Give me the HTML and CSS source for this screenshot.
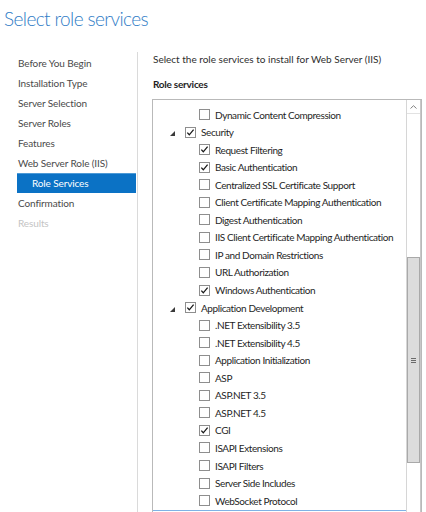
FILE: index.html
```html
<!DOCTYPE html>
<html>
<head>
<meta charset="utf-8">
<link rel="stylesheet" href="styles.css">
</head>
<body>
<div class="page">
  <h1 class="title">Select role services</h1>
  <div class="main">
    <nav class="nav">
      <div class="nav-item">Before You Begin</div>
      <div class="nav-item">Installation Type</div>
      <div class="nav-item">Server Selection</div>
      <div class="nav-item">Server Roles</div>
      <div class="nav-item">Features</div>
      <div class="nav-item">Web Server Role (IIS)</div>
      <div class="nav-item active">Role Services</div>
      <div class="nav-item">Confirmation</div>
      <div class="nav-item disabled">Results</div>
    </nav>
    <section class="content">
      <p class="intro">Select the role services to install for Web Server (IIS)</p>
      <h2 class="label">Role services</h2>
      <div class="listbox">
        <div class="tree">
          <div class="row lvl2"><span class="cb"></span><span class="txt">Dynamic Content Compression</span></div>
          <div class="row lvl1"><svg class="exp" viewBox="0 0 6 6"><polygon points="6,0 6,6 0,6"/></svg><span class="cb on"><svg viewBox="0 0 11 11"><path d="M2.3 5.6 L4.3 7.8 L8.6 2.6"/></svg></span><span class="txt">Security</span></div>
          <div class="row lvl2"><span class="cb on"><svg viewBox="0 0 11 11"><path d="M2.3 5.6 L4.3 7.8 L8.6 2.6"/></svg></span><span class="txt">Request Filtering</span></div>
          <div class="row lvl2"><span class="cb on"><svg viewBox="0 0 11 11"><path d="M2.3 5.6 L4.3 7.8 L8.6 2.6"/></svg></span><span class="txt">Basic Authentication</span></div>
          <div class="row lvl2"><span class="cb"></span><span class="txt">Centralized SSL Certificate Support</span></div>
          <div class="row lvl2"><span class="cb"></span><span class="txt">Client Certificate Mapping Authentication</span></div>
          <div class="row lvl2"><span class="cb"></span><span class="txt">Digest Authentication</span></div>
          <div class="row lvl2"><span class="cb"></span><span class="txt">IIS Client Certificate Mapping Authentication</span></div>
          <div class="row lvl2"><span class="cb"></span><span class="txt">IP and Domain Restrictions</span></div>
          <div class="row lvl2"><span class="cb"></span><span class="txt">URL Authorization</span></div>
          <div class="row lvl2"><span class="cb on"><svg viewBox="0 0 11 11"><path d="M2.3 5.6 L4.3 7.8 L8.6 2.6"/></svg></span><span class="txt">Windows Authentication</span></div>
          <div class="row lvl1"><svg class="exp" viewBox="0 0 6 6"><polygon points="6,0 6,6 0,6"/></svg><span class="cb on"><svg viewBox="0 0 11 11"><path d="M2.3 5.6 L4.3 7.8 L8.6 2.6"/></svg></span><span class="txt">Application Development</span></div>
          <div class="row lvl2"><span class="cb"></span><span class="txt">.NET Extensibility 3.5</span></div>
          <div class="row lvl2"><span class="cb"></span><span class="txt">.NET Extensibility 4.5</span></div>
          <div class="row lvl2"><span class="cb"></span><span class="txt">Application Initialization</span></div>
          <div class="row lvl2"><span class="cb"></span><span class="txt">ASP</span></div>
          <div class="row lvl2"><span class="cb"></span><span class="txt">ASP.NET 3.5</span></div>
          <div class="row lvl2"><span class="cb"></span><span class="txt">ASP.NET 4.5</span></div>
          <div class="row lvl2"><span class="cb on"><svg viewBox="0 0 11 11"><path d="M2.3 5.6 L4.3 7.8 L8.6 2.6"/></svg></span><span class="txt">CGI</span></div>
          <div class="row lvl2"><span class="cb"></span><span class="txt">ISAPI Extensions</span></div>
          <div class="row lvl2"><span class="cb"></span><span class="txt">ISAPI Filters</span></div>
          <div class="row lvl2"><span class="cb"></span><span class="txt">Server Side Includes</span></div>
          <div class="row lvl2"><span class="cb"></span><span class="txt">WebSocket Protocol</span></div>
          <div class="row lvl1 focus"></div>
        </div>
        <div class="scrollbar">
          <div class="sb-up"><svg viewBox="0 0 7 4"><path d="M0.5 3.5 L3.5 0.7 L6.5 3.5"/></svg></div>
          <div class="sb-track">
            <div class="sb-thumb"><svg viewBox="0 0 5 5"><path d="M0 0.5 H5 M0 2.5 H5 M0 4.5 H5"/></svg></div>
          </div>
        </div>
      </div>
    </section>
  </div>
</div>
</body>
</html>
```

FILE: styles.css
```css
html, body {
  margin: 0;
  padding: 0;
  height: 512px;
  overflow: hidden;
  background: #ffffff;
}

.page {
  font-family: Lato, "Open Sans", sans-serif;
  font-size: 10px;
  color: #333333;
}

.title {
  margin: 0;
  height: 52px;
  box-sizing: border-box;
  padding: 6px 0 0 4px;
  font-size: 19px;
  line-height: 26px;
  font-weight: 300;
  letter-spacing: -0.6px;
  color: #2f7cc6;
}

.main {
  display: flex;
  height: 460px;
}

.nav {
  flex: none;
  border-right: 1px solid #dadada;
  padding-top: 1px;
  box-sizing: border-box;
  width: 138px;
}

.nav-item {
  height: 20px;
  line-height: 20px;
  padding-left: 18px;
  color: #4a4a4a;
  white-space: nowrap;
  letter-spacing: -0.12px;
}

.nav-item.active {
  margin-left: 17px;
  margin-right: 1px;
  padding-left: 15px;
  background: #0b72c5;
  color: #ffffff;
  border-top: 1px solid #4d9ad6;
  height: 19px;
  line-height: 19px;
}

.nav-item.disabled {
  color: #c4c4c4;
}

.content {
  flex: 1;
  padding-left: 15px;
  padding-right: 4px;
  min-width: 0;
}

.intro {
  margin: 0;
  line-height: 14px;
  color: #2e2e2e;
}

.label {
  margin: 11px 0 0 0;
  font-size: 10px;
  line-height: 14px;
  font-weight: 700;
  letter-spacing: -0.25px;
  color: #1e1e1e;
}

.listbox {
  margin-top: 8px;
  margin-left: -1px;
  height: 440px;
  border: 1px solid #b9b9b9;
  display: flex;
}

.tree {
  flex: 1;
  padding-top: 5.8px;
  min-width: 0;
}

.row {
  height: 17.55px;
  display: flex;
  align-items: center;
  white-space: nowrap;
  color: #1f1f1f;
  letter-spacing: -0.4px;
}

.row.lvl2 {
  padding-left: 46px;
}

.row.lvl1 {
  padding-left: 17px;
}

.exp {
  width: 5px;
  height: 5px;
  margin-right: 10px;
  margin-top: 3px;
  fill: #3a3a3a;
}

.cb {
  width: 11px;
  height: 11px;
  box-sizing: border-box;
  border: 1px solid #8e8e8e;
  background: #ffffff;
  flex: none;
  display: flex;
}

.cb svg {
  width: 11px;
  height: 11px;
  margin: -1px;
  fill: none;
  stroke: #1a1a1a;
  stroke-width: 1.3;
}

.txt {
  margin-left: 5px;
  line-height: 14px;
}

.row.focus {
  border-top: 1px solid #7fb2e5;
  margin-top: 1px;
}

.scrollbar {
  width: 13px;
  border-left: 1px solid #d6d6d6;
  display: flex;
  flex-direction: column;
  background: #ffffff;
  border-right: 1px solid #c8c8c8;
}

.sb-up {
  height: 13px;
  border-bottom: 1px solid #e2e2e2;
  display: flex;
  align-items: center;
  justify-content: center;
}

.sb-up svg {
  width: 7px;
  height: 4px;
  fill: none;
  stroke: #808080;
  stroke-width: 1;
}

.sb-track {
  flex: 1;
}

.sb-thumb {
  margin-top: 143px;
  height: 206px;
  box-sizing: border-box;
  border: 1px solid #a9a9a9;
  background: #dcdcdc;
  display: flex;
  align-items: center;
  justify-content: center;
}

.sb-thumb svg {
  width: 5px;
  height: 5px;
  fill: none;
  stroke: #6a6a6a;
  stroke-width: 1;
}
```
